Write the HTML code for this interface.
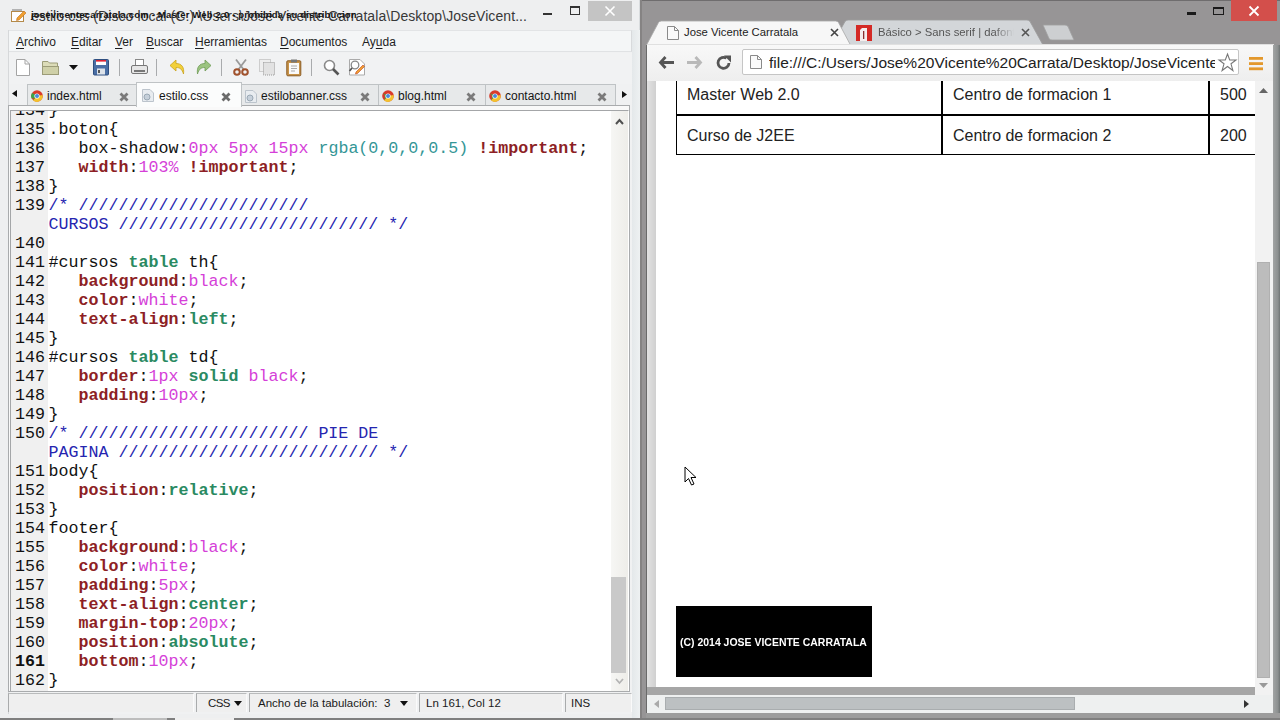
<!DOCTYPE html>
<html><head><meta charset="utf-8">
<style>
*{margin:0;padding:0;box-sizing:border-box}
html,body{width:1280px;height:720px;overflow:hidden;background:#858585;font-family:"Liberation Sans",sans-serif}
.a{position:absolute}
svg{position:absolute;overflow:visible}
/* ---------- editor window ---------- */
#ed{left:0;top:0;width:640px;height:718px;background:#eeeff0;border-right:1px solid #d9dcde}
#ttl{left:31px;top:7.8px;font-size:14px;color:#383838;white-space:nowrap;letter-spacing:0.08px}
#wm{left:31px;top:8.7px;font-size:9.5px;font-weight:bold;color:#151515;white-space:nowrap;letter-spacing:0.18px}
#client{left:8px;top:30px;width:624px;height:684px;background:#f0f1f2;border-left:1px solid #d6d8da}
#menu{left:0;top:0;width:623px;height:22px;background:#f4f6f7;border-bottom:1px solid #e0e2e4;border-top:1px solid #e2e4e6;border-right:1px solid #d8dadc}
#menu span{position:absolute;top:4px;font-size:12px;color:#1e1e1e}
#menu u{text-decoration:underline;text-underline-offset:1.5px}
#tool{left:0;top:23px;width:623px;height:31px;background:#f1f2f3}
.sep{position:absolute;top:6px;width:1px;height:17px;background:#a9abad}
#tabs{left:0;top:54px;width:623px;height:23px}
.tab{position:absolute;top:0;height:22px;background:#e7e9ea;border:1px solid #bfc3c5;border-bottom:none}
.tab span{position:absolute;top:4px;font-size:12px;color:#151515;white-space:nowrap}
.tab.act{top:-2px;height:25px;background:#fbfcfc;z-index:2}
.x{position:absolute;top:6.5px;width:10px;height:10px}
#codeo{left:-1px;top:75px;width:622px;height:587px;background:#f9f9f9;border:1px solid #a9abad}
#code{left:1px;top:80px;width:619px;height:581px;background:#fff;border-top:1px solid #a4a6a8;border-left:1px solid #a4a6a8;border-right:1px solid #fff;overflow:hidden}
#gut{left:0;top:0;width:37px;height:584px;background:#f0f0f0}
.ln{position:absolute;left:0;height:19px;width:600px;font-family:"Liberation Mono",monospace;font-size:16.67px;line-height:19px;white-space:pre;color:#111}
.n{position:absolute;left:4px;width:30px;text-align:right}
.b{font-weight:bold}
.t{position:absolute;left:37.5px}
.k{color:#8d1f25;font-weight:bold}
.v{color:#d53fd8}
.i{color:#2a8a62;font-weight:bold}
.c{color:#2525b0}
.f{color:#349696}
#vsb{left:600px;top:0;width:17px;height:582px;background:linear-gradient(90deg,#f6f6f4,#eeede9)}
#vthumb{left:0;top:466px;width:15px;height:96px;background:#c9c9c9}
#status{left:0;top:663px;width:623px;height:19px}
.sc{position:absolute;top:0;height:19px;background:#efefef;border-left:1px solid #a9abac;border-top:1px solid #b9bbbc;border-right:1px solid #fafafa}
.sc span{position:absolute;top:3px;font-size:11.5px;color:#1a1a1a;white-space:nowrap}
/* ---------- chrome ---------- */
#cr{left:640px;top:0;width:640px;height:720px;background:#979596;border-left:2px solid #858383}
#ctab1{left:6px;top:20px;width:205px;height:25px}
#ctab2{left:203px;top:21px;width:200px;height:24px}
.ttxt{position:absolute;font-size:11.3px;white-space:nowrap}
#ctool{left:5px;top:44px;width:627px;height:37px;background:linear-gradient(#f8f8f8,#eeeeee);border-top:1px solid #e0e0e0}
#omni{left:95px;top:4px;width:497px;height:26px;background:#fff;border:1px solid #c5c5c5;border-radius:2px}
#url{left:26px;top:4px;font-size:15.5px;color:#222;white-space:nowrap;width:446px;overflow:hidden}
#page{left:14px;top:81px;width:599px;height:606px;background:#fff;overflow:hidden}
#lstrip{left:5px;top:81px;width:9px;height:614px;background:linear-gradient(90deg,#e2e2e2,#d0d0d0)}
#cvsb{left:613px;top:81px;width:18px;height:614px;background:#f2f2f2}
#cvthumb{left:2px;top:181px;width:13px;height:416px;background:#bcbcbc;border:1px solid #b0b0b0}
#hband{left:5px;top:687px;width:608px;height:8px;background:#a6a6a6}
#chsb{left:5px;top:695px;width:626px;height:18px;background:#eef0f0}
#chthumb{left:18px;top:2px;width:410px;height:13px;background:#bcc0c2;border:1px solid #a9adaf}
</style></head><body>

<!-- ================= EDITOR ================= -->
<div id="ed" class="a">
  <svg style="left:11px;top:9px" width="16" height="13" viewBox="0 0 16 13">
    <rect x="0.5" y="2.5" width="12" height="10" fill="#fff" stroke="#b48a4a"/>
    <path d="M2 2 v-2 M4 2 v-2 M6 2 v-2 M8 2 v-2 M10 2v-2" stroke="#777" stroke-width="1"/>
    <path d="M6 9 L13 2 L15 4 L8 11 L5.5 11.5 Z" fill="#f0a030" stroke="#c07020" stroke-width="0.6"/>
  </svg>
  <div id="ttl" class="a">estilo.css (Disco local (C:) \Users\Jose Vicente Carratala\Desktop\JoseVicent...</div>
  <div id="wm" class="a">josevicentecarratala.com - Master Web 2.0 - prohibida su distribucion</div>
  <!-- window controls -->
  <div class="a" style="left:543px;top:13px;width:9px;height:2px;background:#333"></div>
  <div class="a" style="left:570px;top:6px;width:10px;height:9px;border:1px solid #333;border-top-width:2px"></div>
  <div class="a" style="left:588px;top:1px;width:44px;height:20px;background:#c4c4c4"></div>
  <svg style="left:605px;top:6px" width="10" height="10"><path d="M0.5 0.5 L9.5 9.5 M9.5 0.5 L0.5 9.5" stroke="#fff" stroke-width="1.6"/></svg>

  <div id="client" class="a">
    <div id="menu" class="a">
      <span style="left:7px"><u>A</u>rchivo</span>
      <span style="left:62px"><u>E</u>ditar</span>
      <span style="left:106px"><u>V</u>er</span>
      <span style="left:137px"><u>B</u>uscar</span>
      <span style="left:186px"><u>H</u>erramientas</span>
      <span style="left:271px"><u>D</u>ocumentos</span>
      <span style="left:353px">Ay<u>u</u>da</span>
    </div>
    <div id="tool" class="a">
      <!-- new -->
      <svg style="left:6px;top:6px" width="16" height="17"><path d="M1.5 0.5 H10 L14.5 5 V16.5 H1.5 Z" fill="#fff" stroke="#a4a4a4"/><path d="M10 0.5 V5 H14.5" fill="none" stroke="#a4a4a4"/></svg>
      <!-- open -->
      <svg style="left:33px;top:7px" width="17" height="15"><path d="M0.5 1.5 H6 L7.5 3 H15.5 V14.5 H0.5 Z" fill="#dcdcb8" stroke="#9c9c78"/><rect x="0.5" y="6.5" width="16" height="8" fill="#cfd0a8" stroke="#9c9c78"/></svg>
      <svg style="left:60px;top:12px" width="9" height="5"><path d="M0 0 H9 L4.5 5 Z" fill="#111"/></svg>
      <!-- save -->
      <svg style="left:84px;top:6px" width="16" height="17"><rect x="0.5" y="0.5" width="15" height="15.5" rx="1" fill="#4a6fa5" stroke="#2f4f80"/><rect x="3" y="1" width="10" height="5" fill="#fff"/><rect x="3" y="1" width="10" height="1.6" fill="#d23"/><rect x="4" y="9.5" width="8" height="6" fill="#dde3ea"/><rect x="5" y="11" width="2" height="3" fill="#555"/></svg>
      <div class="sep" style="left:110px"></div>
      <!-- print -->
      <svg style="left:122px;top:6px" width="17" height="16"><rect x="4.5" y="0.5" width="8" height="6" fill="#fff" stroke="#888"/><rect x="0.5" y="6.5" width="16" height="8" rx="1.5" fill="#e6e6e6" stroke="#777"/><rect x="3" y="11" width="11" height="2" fill="#777"/></svg>
      <div class="sep" style="left:147px"></div>
      <!-- undo -->
      <svg style="left:160px;top:6px" width="17" height="17"><path d="M7 1 L1 6.5 L7 12 V8.5 C11 8.5 13 10 14.5 15 C15.5 8 12.5 4.5 7 4.5 Z" fill="#f2d03a" stroke="#c9a21a" stroke-width="0.8"/></svg>
      <!-- redo -->
      <svg style="left:186px;top:6px" width="17" height="17"><path d="M10 1 L16 6.5 L10 12 V8.5 C6 8.5 4 10 2.5 15 C1.5 8 4.5 4.5 10 4.5 Z" fill="#9bc47f" stroke="#6f9a55" stroke-width="0.8"/></svg>
      <div class="sep" style="left:212px"></div>
      <!-- cut -->
      <svg style="left:224px;top:6px" width="16" height="17"><path d="M3 0.5 L11 11 M13 0.5 L5 11" stroke="#9a9a9a" stroke-width="1.8"/><circle cx="4" cy="13" r="2.8" fill="none" stroke="#a0522d" stroke-width="2"/><circle cx="12" cy="13" r="2.8" fill="none" stroke="#a0522d" stroke-width="2"/></svg>
      <!-- copy -->
      <svg style="left:250px;top:6px" width="17" height="17"><rect x="0.5" y="0.5" width="11" height="12" fill="#eee" stroke="#aaa" stroke-dasharray="1 1"/><rect x="4.5" y="3.5" width="11" height="12.5" fill="#e2e2e2" stroke="#999" stroke-dasharray="1 1"/></svg>
      <!-- paste -->
      <svg style="left:277px;top:6px" width="16" height="17"><rect x="0.8" y="1.8" width="14" height="15" rx="1" fill="#c8944a" stroke="#8a5a22"/><rect x="3" y="4" width="10" height="11" fill="#fafafa"/><rect x="5" y="0.5" width="6" height="3" fill="#777"/><path d="M5 7 H11 M5 9.5 H11 M5 12 H9" stroke="#aaa"/></svg>
      <div class="sep" style="left:302px"></div>
      <!-- find -->
      <svg style="left:314px;top:6px" width="17" height="17"><circle cx="6.5" cy="6.5" r="5" fill="#fff" stroke="#8a8a8a" stroke-width="1.6"/><path d="M10 10 L15.5 15.5" stroke="#555" stroke-width="2.6"/></svg>
      <!-- replace -->
      <svg style="left:340px;top:6px" width="17" height="17"><path d="M0.5 0.5 H11 L15.5 5 V16 H0.5 Z" fill="#fff" stroke="#aaa"/><circle cx="6" cy="6" r="3.8" fill="#fff" stroke="#888" stroke-width="1.3"/><path d="M3 9 L0.5 12" stroke="#555" stroke-width="1.8"/><path d="M7 13 L14 6 L15.5 7.5 L8.5 14.5 L6.5 15 Z" fill="#f0a030" stroke="#c04020" stroke-width="0.6"/></svg>
    </div>
    <div id="tabs" class="a">
      <svg style="left:3px;top:6px" width="5" height="7"><path d="M5 0 V7 L0 3.5 Z" fill="#111"/></svg>
      <div class="tab" style="left:18px;width:110px">
        <svg style="left:3px;top:5px" width="12" height="12" viewBox="0 0 12 12"><circle cx="6" cy="6" r="5.8" fill="#d93a2a"/><path d="M6 6 L0.7 8.8 A5.8 5.8 0 0 1 1 3 Z" fill="#3aa54a"/><path d="M6 6 L11.6 5 A5.8 5.8 0 0 1 2 10.3 Z" fill="#f3c22e"/><path d="M6 6 L1 3 A5.8 5.8 0 0 1 2 10.3 Z" fill="#3aa54a"/><circle cx="6" cy="6" r="2.6" fill="#fff"/><circle cx="6" cy="6" r="2" fill="#4a88d8"/></svg>
        <span style="left:19px">index.html</span>
        <svg class="x" style="left:91px"><path d="M1.5 1.5 L8.5 8.5 M8.5 1.5 L1.5 8.5" stroke="#7a7a7a" stroke-width="2.8"/></svg>
      </div>
      <div class="tab act" style="left:127px;width:106px">
        <svg style="left:5px;top:6px" width="12" height="13"><path d="M0.5 0.5 H8 L11.5 4 V12.5 H0.5 Z" fill="#e8ecf0" stroke="#bcc4cc"/><circle cx="5" cy="8" r="3" fill="#c6d0da" stroke="#9aa8b4"/></svg>
        <span style="left:22px;top:6px">estilo.css</span>
        <svg class="x" style="left:84px;top:8.5px"><path d="M1.5 1.5 L8.5 8.5 M8.5 1.5 L1.5 8.5" stroke="#6a6a6a" stroke-width="2.8"/></svg>
      </div>
      <div class="tab" style="left:232px;width:138px">
        <svg style="left:3px;top:5px" width="12" height="13"><path d="M0.5 0.5 H8 L11.5 4 V12.5 H0.5 Z" fill="#e8ecf0" stroke="#bcc4cc"/><circle cx="5" cy="8" r="3" fill="#c6d0da" stroke="#9aa8b4"/></svg>
        <span style="left:19px">estilobanner.css</span>
        <svg class="x" style="left:118px"><path d="M1.5 1.5 L8.5 8.5 M8.5 1.5 L1.5 8.5" stroke="#7a7a7a" stroke-width="2.8"/></svg>
      </div>
      <div class="tab" style="left:369px;width:108px">
        <svg style="left:3px;top:5px" width="12" height="12" viewBox="0 0 12 12"><circle cx="6" cy="6" r="5.8" fill="#d93a2a"/><path d="M6 6 L11.6 5 A5.8 5.8 0 0 1 2 10.3 Z" fill="#f3c22e"/><path d="M6 6 L1 3 A5.8 5.8 0 0 1 2 10.3 Z" fill="#3aa54a"/><circle cx="6" cy="6" r="2.6" fill="#fff"/><circle cx="6" cy="6" r="2" fill="#4a88d8"/></svg>
        <span style="left:19px">blog.html</span>
        <svg class="x" style="left:87px"><path d="M1.5 1.5 L8.5 8.5 M8.5 1.5 L1.5 8.5" stroke="#7a7a7a" stroke-width="2.8"/></svg>
      </div>
      <div class="tab" style="left:476px;width:131px">
        <svg style="left:3px;top:5px" width="12" height="12" viewBox="0 0 12 12"><circle cx="6" cy="6" r="5.8" fill="#d93a2a"/><path d="M6 6 L11.6 5 A5.8 5.8 0 0 1 2 10.3 Z" fill="#f3c22e"/><path d="M6 6 L1 3 A5.8 5.8 0 0 1 2 10.3 Z" fill="#3aa54a"/><circle cx="6" cy="6" r="2.6" fill="#fff"/><circle cx="6" cy="6" r="2" fill="#4a88d8"/></svg>
        <span style="left:19px">contacto.html</span>
        <svg class="x" style="left:111px"><path d="M1.5 1.5 L8.5 8.5 M8.5 1.5 L1.5 8.5" stroke="#7a7a7a" stroke-width="2.8"/></svg>
      </div>
      <svg style="left:613px;top:7px" width="5" height="7"><path d="M0 0 V7 L5 3.5 Z" fill="#111"/></svg>
    </div>
    <div id="codeo" class="a"></div>
    <div id="code" class="a">
      <div id="gut" class="a"></div>
<div class="ln" style="top:-10.3px"><span class="n">134</span><span class="t">}</span></div>
<div class="ln" style="top:8.7px"><span class="n">135</span><span class="t">.boton{</span></div>
<div class="ln" style="top:27.7px"><span class="n">136</span><span class="t">   box-shadow:<span class="v">0px 5px 15px</span> <span class="f">rgba(0,0,0,0.5)</span> <span class="k">!important</span>;</span></div>
<div class="ln" style="top:46.7px"><span class="n">137</span><span class="t">   <span class="k">width</span>:<span class="v">103%</span> <span class="k">!important</span>;</span></div>
<div class="ln" style="top:65.7px"><span class="n">138</span><span class="t">}</span></div>
<div class="ln" style="top:84.7px"><span class="n">139</span><span class="t"><span class="c">/* ///////////////////////</span></span></div>
<div class="ln" style="top:103.7px"><span class="n"></span><span class="t"><span class="c">CURSOS ////////////////////////// */</span></span></div>
<div class="ln" style="top:122.7px"><span class="n">140</span><span class="t"></span></div>
<div class="ln" style="top:141.7px"><span class="n">141</span><span class="t">#cursos <span class="i">table</span> th{</span></div>
<div class="ln" style="top:160.7px"><span class="n">142</span><span class="t">   <span class="k">background</span>:<span class="v">black</span>;</span></div>
<div class="ln" style="top:179.7px"><span class="n">143</span><span class="t">   <span class="k">color</span>:<span class="v">white</span>;</span></div>
<div class="ln" style="top:198.7px"><span class="n">144</span><span class="t">   <span class="k">text-align</span>:<span class="i">left</span>;</span></div>
<div class="ln" style="top:217.7px"><span class="n">145</span><span class="t">}</span></div>
<div class="ln" style="top:236.7px"><span class="n">146</span><span class="t">#cursos <span class="i">table</span> td{</span></div>
<div class="ln" style="top:255.7px"><span class="n">147</span><span class="t">   <span class="k">border</span>:<span class="v">1px</span> <span class="i">solid</span> <span class="v">black</span>;</span></div>
<div class="ln" style="top:274.7px"><span class="n">148</span><span class="t">   <span class="k">padding</span>:<span class="v">10px</span>;</span></div>
<div class="ln" style="top:293.7px"><span class="n">149</span><span class="t">}</span></div>
<div class="ln" style="top:312.7px"><span class="n">150</span><span class="t"><span class="c">/* /////////////////////// PIE DE</span></span></div>
<div class="ln" style="top:331.7px"><span class="n"></span><span class="t"><span class="c">PAGINA ////////////////////////// */</span></span></div>
<div class="ln" style="top:350.7px"><span class="n">151</span><span class="t">body{</span></div>
<div class="ln" style="top:369.7px"><span class="n">152</span><span class="t">   <span class="k">position</span>:<span class="i">relative</span>;</span></div>
<div class="ln" style="top:388.7px"><span class="n">153</span><span class="t">}</span></div>
<div class="ln" style="top:407.7px"><span class="n">154</span><span class="t">footer{</span></div>
<div class="ln" style="top:426.7px"><span class="n">155</span><span class="t">   <span class="k">background</span>:<span class="v">black</span>;</span></div>
<div class="ln" style="top:445.7px"><span class="n">156</span><span class="t">   <span class="k">color</span>:<span class="v">white</span>;</span></div>
<div class="ln" style="top:464.7px"><span class="n">157</span><span class="t">   <span class="k">padding</span>:<span class="v">5px</span>;</span></div>
<div class="ln" style="top:483.7px"><span class="n">158</span><span class="t">   <span class="k">text-align</span>:<span class="i">center</span>;</span></div>
<div class="ln" style="top:502.7px"><span class="n">159</span><span class="t">   <span class="k">margin-top</span>:<span class="v">20px</span>;</span></div>
<div class="ln" style="top:521.7px"><span class="n">160</span><span class="t">   <span class="k">position</span>:<span class="i">absolute</span>;</span></div>
<div class="ln" style="top:540.7px"><span class="n b">161</span><span class="t">   <span class="k">bottom</span>:<span class="v">10px</span>;</span></div>
<div class="ln" style="top:559.7px"><span class="n">162</span><span class="t">}</span></div>
      <div id="vsb" class="a">
        <svg style="left:4px;top:7px" width="9" height="7"><path d="M1 6 L4.5 2 L8 6" fill="none" stroke="#505050" stroke-width="2"/></svg>
        <div id="vthumb" class="a"></div>
        <svg style="left:4px;top:567px" width="9" height="7"><path d="M1 1 L4.5 5 L8 1" fill="none" stroke="#b4b4b4" stroke-width="1.8"/></svg>
      </div>
    </div>
    <div id="status" class="a">
      <div class="sc" style="left:-1px;width:186px"></div>
      <div class="sc" style="left:187px;width:51px"><span style="left:11px;letter-spacing:-0.6px">CSS</span><svg style="left:37px;top:7px" width="8" height="5"><path d="M0 0 H8 L4 5 Z" fill="#111"/></svg></div>
      <div class="sc" style="left:240px;width:168px"><span style="left:8px">Ancho de la tabulación:&nbsp; 3</span><svg style="left:150px;top:7px" width="8" height="5"><path d="M0 0 H8 L4 5 Z" fill="#111"/></svg></div>
      <div class="sc" style="left:410px;width:144px"><span style="left:6px">Ln 161, Col 12</span></div>
      <div class="sc" style="left:556px;width:67px"><span style="left:5px">INS</span></div>
    </div>
  </div>
</div>
<div class="a" style="left:632px;top:30px;width:8px;height:688px;background:linear-gradient(90deg,#e4e8ea,#eef1f2)"></div>
<!-- ================= CHROME ================= -->
<div id="cr" class="a">
  <div class="a" style="left:0;top:0;width:640px;height:1px;background:#6f6d6e"></div>
  <!-- window controls -->
  <div class="a" style="left:545px;top:12px;width:9px;height:3px;background:#1a1a1a"></div>
  <div class="a" style="left:571px;top:7px;width:11px;height:8px;border:1px solid #1a1a1a;border-top-width:2px"></div>
  <div class="a" style="left:589px;top:0;width:46px;height:21px;background:#d34f4b"></div>
  <svg style="left:607px;top:6px" width="10" height="10"><path d="M0.5 0.5 L9.5 9.5 M9.5 0.5 L0.5 9.5" stroke="#fff" stroke-width="1.8"/></svg>
  <!-- tabs -->
  <svg style="left:190px;top:20px" width="240" height="25"><path d="M0 25 L13 1.5 Q14 0 16 0 H195 Q197 0 198 1.5 L211 25 Z" fill="#d3d6d9" stroke="#9c9c9c" stroke-width="0.8"/></svg>
  <svg style="left:401px;top:25px" width="36" height="16"><path d="M0 0 H22 Q24 0 25 1.5 L31 15 H9 Q7 15 6 13.5 Z" fill="#cdcfd1" stroke="#a0a0a0" stroke-width="0.8"/></svg>
  <svg style="left:4px;top:21px" width="220" height="25"><path d="M0 25 L12.5 1.5 Q13.5 0 15.5 0 H189.5 Q191.5 0 192.5 1.5 L205 25 Z" fill="#f7f7f7" stroke="#a8a8a8" stroke-width="0.8"/></svg>
  <svg style="left:25px;top:26px" width="12" height="14"><path d="M0.5 0.5 H7.5 L11.5 4.5 V13.5 H0.5 Z" fill="#fafafa" stroke="#8a8a8a"/><path d="M7.5 0.5 V4.5 H11.5" fill="none" stroke="#8a8a8a"/></svg>
  <div class="ttxt" style="left:42px;top:26px;color:#222">Jose Vicente Carratala</div>
  <svg style="left:188px;top:28px" width="9" height="9"><path d="M1 1 L8 8 M8 1 L1 8" stroke="#444" stroke-width="1.6"/></svg>
  <svg style="left:214px;top:25px" width="16" height="16"><rect width="16" height="16" fill="#d42a26"/><path d="M4 16 V5 L6 3 H11 V16 Z" fill="#f4eeee"/><rect x="7" y="6" width="1.3" height="8" fill="#8a3030"/></svg>
  <div class="ttxt" style="left:236px;top:26px;color:#555;width:136px;overflow:hidden;-webkit-mask-image:linear-gradient(90deg,#000 85%,transparent);mask-image:linear-gradient(90deg,#000 85%,transparent)">Básico &gt; Sans serif | dafont</div>
  <svg style="left:379px;top:28px" width="9" height="9"><path d="M1 1 L8 8 M8 1 L1 8" stroke="#555" stroke-width="1.6"/></svg>

  <div id="ctool" class="a">
    <svg style="left:12px;top:11px" width="16" height="13"><path d="M6.5 1 L1.5 6.5 L6.5 12 M1.5 6.5 H15" fill="none" stroke="#555" stroke-width="2.8"/></svg>
    <svg style="left:39px;top:11px" width="16" height="13"><path d="M9.5 1 L14.5 6.5 L9.5 12 M14.5 6.5 H1" fill="none" stroke="#b9b9b9" stroke-width="2.8"/></svg>
    <svg style="left:69px;top:10px" width="16" height="16"><path d="M13 8 A5.5 5.5 0 1 1 10.5 3.2" fill="none" stroke="#555" stroke-width="2.8"/><path d="M8 0.5 H15 V7.5 Z" fill="#555"/></svg>
    <div id="omni" class="a">
      <svg style="left:7px;top:5px" width="12" height="14"><path d="M0.5 0.5 H7.5 L11.5 4.5 V13.5 H0.5 Z" fill="#fafafa" stroke="#8a8a8a"/><path d="M7.5 0.5 V4.5 H11.5" fill="none" stroke="#8a8a8a"/></svg>
      <div id="url" class="a">file:///C:/Users/Jose%20Vicente%20Carrata/Desktop/JoseVicente/</div>
      <svg style="left:475px;top:3px" width="19" height="19" viewBox="0 0 19 19"><path d="M9.5 1 L11.7 7 H18 L13 10.8 L14.9 17.5 L9.5 13.5 L4.1 17.5 L6 10.8 L1 7 H7.3 Z" fill="#fff" stroke="#777" stroke-width="1.1"/></svg>
    </div>
    <svg style="left:602px;top:12px" width="14" height="14"><rect y="0" width="14" height="2.8" fill="#e3982c"/><rect y="5.2" width="14" height="2.8" fill="#e3982c"/><rect y="10.4" width="14" height="2.8" fill="#e3982c"/></svg>
  </div>

  <div id="lstrip" class="a"></div>
  <div class="a" style="left:4px;top:45px;width:1px;height:668px;background:#6a6a6a"></div>
  <div id="page" class="a">
    <!-- table -->
    <div class="a" style="left:20px;top:-10px;width:1px;height:84px;background:#000"></div>
    <div class="a" style="left:285px;top:-10px;width:2px;height:84px;background:#000"></div>
    <div class="a" style="left:552px;top:-10px;width:2px;height:84px;background:#000"></div>
    <div class="a" style="left:20px;top:33px;width:600px;height:2px;background:#000"></div>
    <div class="a" style="left:20px;top:73px;width:600px;height:1px;background:#000"></div>
    <div class="a" style="left:31px;top:5px;font-size:16px;color:#222">Master Web 2.0</div>
    <div class="a" style="left:297px;top:5px;font-size:16px;color:#222">Centro de formacion 1</div>
    <div class="a" style="left:564px;top:5px;font-size:16px;color:#222">500</div>
    <div class="a" style="left:31px;top:46px;font-size:16px;color:#222">Curso de J2EE</div>
    <div class="a" style="left:297px;top:46px;font-size:16px;color:#222">Centro de formacion 2</div>
    <div class="a" style="left:564px;top:46px;font-size:16px;color:#222">200</div>
    <!-- footer -->
    <div class="a" style="left:20px;top:525px;width:196px;height:71px;background:#000"></div>
    <div class="a" style="left:24px;top:555px;font-size:11.5px;font-weight:bold;color:#fff;white-space:nowrap;transform-origin:0 0;transform:scaleX(0.91)">(C) 2014 JOSE VICENTE CARRATALA</div>
    <!-- cursor -->
    <svg style="left:28px;top:385px" width="14" height="21" viewBox="0 0 14 21"><path d="M1 1 V16 L4.5 12.5 L7.5 19 L10 18 L7 11.5 H12 Z" fill="#fff" stroke="#000" stroke-width="1" stroke-linejoin="round"/></svg>
  </div>
  <div id="cvsb" class="a">
    <svg style="left:4px;top:7px" width="9" height="5"><path d="M0 5 H9 L4.5 0 Z" fill="#666"/></svg>
    <div id="cvthumb" class="a"></div>
    <svg style="left:4px;top:602px" width="9" height="5"><path d="M0 0 H9 L4.5 5 Z" fill="#999"/></svg>
  </div>
  <div id="hband" class="a"></div>
  <div class="a" style="left:631px;top:45px;width:7px;height:675px;background:linear-gradient(90deg,#a2a4a4,#8c9090 70%,#6e7373)"></div>
  <div class="a" style="left:4px;top:713px;width:634px;height:7px;background:#9c9c9c"></div>
  <div id="chsb" class="a">
    <svg style="left:7px;top:5px" width="5" height="8"><path d="M5 0 V8 L0 4 Z" fill="#aaa"/></svg>
    <div id="chthumb" class="a"></div>
    <svg style="left:597px;top:5px" width="5" height="8"><path d="M0 0 V8 L5 4 Z" fill="#333"/></svg>
  </div>
</div>
<!-- taskbar strip -->
<div class="a" style="left:0;top:718px;width:1280px;height:2px;background:#7f7f7f"></div>
<div class="a" style="left:113px;top:718px;width:54px;height:2px;background:#bdbdbd"></div>
<div class="a" style="left:175px;top:718px;width:59px;height:2px;background:#f0f0f0"></div>

</body></html>
